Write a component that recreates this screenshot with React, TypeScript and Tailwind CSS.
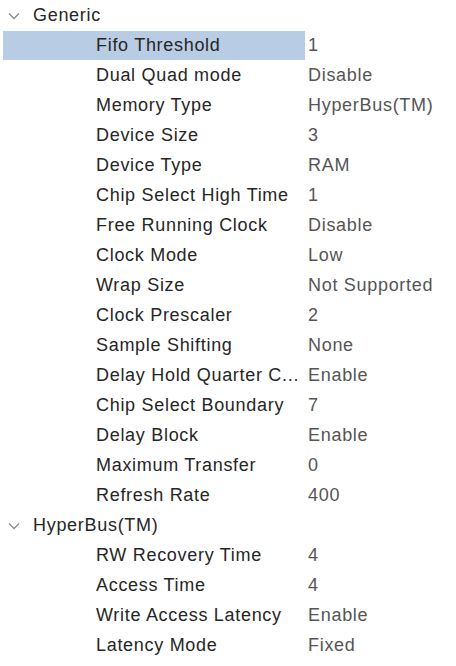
import React from "react"

type Prop = { label: string; value: string }

const groups: { title: string; props: Prop[] }[] = [
  {
    title: "Generic",
    props: [
      { label: "Fifo Threshold", value: "1" },
      { label: "Dual Quad mode", value: "Disable" },
      { label: "Memory Type", value: "HyperBus(TM)" },
      { label: "Device Size", value: "3" },
      { label: "Device Type", value: "RAM" },
      { label: "Chip Select High Time", value: "1" },
      { label: "Free Running Clock", value: "Disable" },
      { label: "Clock Mode", value: "Low" },
      { label: "Wrap Size", value: "Not Supported" },
      { label: "Clock Prescaler", value: "2" },
      { label: "Sample Shifting", value: "None" },
      { label: "Delay Hold Quarter C...", value: "Enable" },
      { label: "Chip Select Boundary", value: "7" },
      { label: "Delay Block", value: "Enable" },
      { label: "Maximum Transfer", value: "0" },
      { label: "Refresh Rate", value: "400" },
    ],
  },
  {
    title: "HyperBus(TM)",
    props: [
      { label: "RW Recovery Time", value: "4" },
      { label: "Access Time", value: "4" },
      { label: "Write Access Latency", value: "Enable" },
      { label: "Latency Mode", value: "Fixed" },
    ],
  },
]

function Chevron() {
  return (
    <svg width="14" height="10" viewBox="0 0 14 10" className="shrink-0">
      <path d="M2 2.5 L7 7.5 L12 2.5" fill="none" stroke="#8a8a8a" strokeWidth="1.3" />
    </svg>
  )
}

export default function App() {
  return (
    <div
      className="w-[456px] h-[666px] bg-white overflow-hidden text-[18px] tracking-[0.7px] text-[#262626]"
      style={{ fontFamily: "'Liberation Sans', Arial, sans-serif" }}
    >
      {groups.map((g) => (
        <div key={g.title}>
          <div className="h-[30px] flex items-center pl-[7px] pt-[1px]">
            <Chevron />
            <span className="ml-[12px]">{g.title}</span>
          </div>
          {g.props.map((p, i) => {
            const selected = g.title === "Generic" && i === 0
            return (
              <div key={p.label} className="h-[30px] flex items-center">
                <div
                  className={
                    "ml-[3px] w-[302px] h-[29px] flex items-center pl-[93px] pt-[1px] whitespace-nowrap overflow-hidden " +
                    (selected ? "bg-[#b8cce4]" : "")
                  }
                >
                  {p.label}
                </div>
                <div className="pl-[3px] pt-[1px] text-[#555555] whitespace-nowrap">{p.value}</div>
              </div>
            )
          })}
        </div>
      ))}
    </div>
  )
}
